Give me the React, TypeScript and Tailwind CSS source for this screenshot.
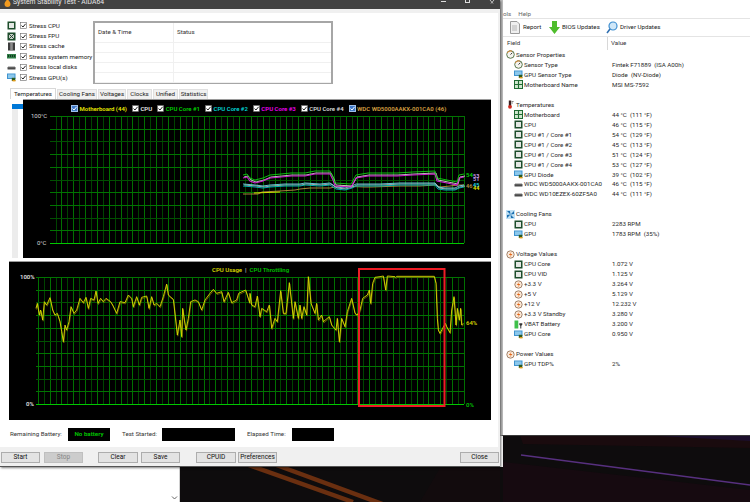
import React from "react";

const FONT = { fontFamily: 'Roboto, "Noto Sans", sans-serif' };

function Icon({ kind }: { kind: string }) {
  const common = { width: 9, height: 9, viewBox: "0 0 9 9", className: "shrink-0 block" };
  switch (kind) {
    case "cpu":
      return (
        <svg {...common}>
          <rect x="0.5" y="0.5" width="8" height="8" fill="#1d4d2b" />
          <rect x="2" y="2" width="5" height="5" fill="#e4e8e4" />
        </svg>
      );
    case "fpu":
      return (
        <svg {...common}>
          <rect x="0.5" y="0.5" width="8" height="8" fill="#1d4d2b" />
          <rect x="2" y="2" width="5" height="5" fill="#c8d0c8" />
          <path d="M2 2L7 7M7 2L2 7" stroke="#20402a" strokeWidth="0.9" />
        </svg>
      );
    case "cache":
      return (
        <svg {...common}>
          <rect x="1" y="0.5" width="7" height="8" fill="#3d3d3d" />
          <rect x="3.2" y="1" width="2.6" height="7" fill="#8b8b8b" />
        </svg>
      );
    case "ram":
      return (
        <svg {...common}>
          <rect x="0" y="2" width="9" height="4.5" fill="#2f7d46" />
          <path d="M1 3h1v2H1zM3 3h1v2H3zM5 3h1v2H5zM7 3h1v2H7z" fill="#123a20" />
        </svg>
      );
    case "board":
      return (
        <svg {...common}>
          <rect x="0.5" y="0.5" width="8" height="8" fill="#cfe6cf" stroke="#1f6b32" />
          <path d="M4.5 1v7M1 4.5h7" stroke="#1f6b32" strokeWidth="1.1" />
        </svg>
      );
    case "disk":
      return (
        <svg {...common}>
          <rect x="0.5" y="4" width="8" height="2.6" rx="0.5" fill="#4a4a4a" />
          <rect x="1" y="3.4" width="7" height="0.9" fill="#9a9a9a" />
        </svg>
      );
    case "gpu":
      return (
        <svg {...common}>
          <rect x="0" y="0.5" width="8.5" height="5.5" fill="#3f93cf" />
          <rect x="1" y="1.4" width="6.5" height="3.6" fill="#8cc8ec" />
          <rect x="4.8" y="4.8" width="3.5" height="3.2" fill="#2d5b1f" />
          <rect x="5.5" y="7" width="3" height="1.4" fill="#e39a15" />
        </svg>
      );
    case "sensor":
      return (
        <svg {...common}>
          <circle cx="4.5" cy="4.5" r="3.8" fill="#f4f4f0" stroke="#4a6a3a" strokeWidth="0.9" />
          <path d="M1.3 3A3.6 3.6 0 0 1 6 1.1" stroke="#d9822b" strokeWidth="1" fill="none" />
          <path d="M4.5 4.5L6.3 2.8" stroke="#222" strokeWidth="0.9" />
        </svg>
      );
    case "temp":
      return (
        <svg {...common}>
          <rect x="2.8" y="0.5" width="2.4" height="5.5" fill="#3a2020" />
          <circle cx="4" cy="6.8" r="1.9" fill="#d0281c" />
          <path d="M5.6 1.5h2M5.6 3h1.4" stroke="#555" strokeWidth="0.7" />
        </svg>
      );
    case "fan":
      return (
        <svg {...common}>
          <rect x="0" y="0" width="9" height="9" fill="#bfe0f4" />
          <path d="M4.5 4.5L1 1h3zM4.5 4.5L8 1v3zM4.5 4.5L8 8H5zM4.5 4.5L1 8V5z" fill="#1a6fb0" />
        </svg>
      );
    case "volt":
      return (
        <svg {...common}>
          <circle cx="4.5" cy="4.5" r="3.7" fill="#fbe9d8" stroke="#8a6a50" strokeWidth="0.8" />
          <path d="M5.6 1.4L2.8 5h2L3.5 7.8 6.4 4h-2z" fill="#e2671a" />
        </svg>
      );
    case "batt":
      return (
        <svg {...common}>
          <rect x="0.5" y="0.5" width="3.8" height="8" fill="#3fc04a" />
          <path d="M6 0.5v3M7.5 0.5v3M5.3 3.2h3v1.6l-1 1V8.5h-1V5.8l-1-1z" fill="#333" />
        </svg>
      );
    default:
      return <span className="w-[9px] h-[9px]" />;
  }
}

function Check({ blue }: { blue?: boolean }) {
  return (
    <svg width="7" height="7" viewBox="0 0 7 7" className="shrink-0 block">
      <rect x="0.5" y="0.5" width="6" height="6" fill={blue ? "#3f78c8" : "#ffffff"} stroke={blue ? "#9fc0ea" : "#666"} strokeWidth={blue ? 1 : 0.6} />
      <path d="M1.5 3.6L3 5L5.6 1.8" stroke={blue ? "#fff" : "#222"} strokeWidth="1" fill="none" />
    </svg>
  );
}

const stress = [
  ["cpu", "Stress CPU"],
  ["fpu", "Stress FPU"],
  ["cache", "Stress cache"],
  ["ram", "Stress system memory"],
  ["disk", "Stress local disks"],
  ["gpu", "Stress GPU(s)"],
];

const tabs: [string, string][] = [
  ["Temperatures", "w-[46px]"],
  ["Cooling Fans", "w-[40px]"],
  ["Voltages", "w-[28px]"],
  ["Clocks", "w-[25px]"],
  ["Unified", "w-[25px]"],
  ["Statistics", "w-[29px]"],
];

function Grid({ x0, x1, y0, y1 }: { x0: number; x1: number; y0: number; y1: number }) {
  const hs: number[] = [];
  for (let i = 0; i <= 10; i++) hs.push(y0 + ((y1 - y0) * i) / 10);
  const vs: number[] = [];
  for (let x = x1; x >= x0; x -= 5.92) vs.push(x);
  return (
    <g shapeRendering="crispEdges">
      {vs.map((x, i) => (
        <line key={x} x1={Math.round(x)} x2={Math.round(x)} y1={y0} y2={y1} stroke={i % 2 ? "#004400" : "#017001"} strokeWidth="1" />
      ))}
      {hs.map((y, i) => (
        <line key={y} x1={x0} x2={x1} y1={Math.round(y)} y2={Math.round(y)} stroke={i === 10 ? "#00c800" : i % 3 === 2 ? "#015001" : "#017401"} strokeWidth="1" />
      ))}
    </g>
  );
}

const pts = (a: number[][]) => a.map((p) => p.join(",")).join(" ");

// temperature traces, in page coordinates
const green = [[243,175],[247,174],[250,178],[255,180],[263,178],[270,175],[281,174],[291,173],[305,173],[315,171],[330,171],[333,177],[335,183],[351,184],[356,175],[368,173],[380,173],[397,173],[413,172],[435,171],[437,178],[447,180],[457,182],[459,175],[464,174]];
const shift = (a: number[][], d: number, dx = 0) => a.map(([x, y]) => [x + dx, y + d]);
const cyan = [[243,184],[255,185],[263,186],[270,185],[285,184],[300,184],[305,183],[320,184],[330,183],[336,187],[345,188],[352,186],[356,184],[380,184],[400,183],[420,183],[435,183],[438,187],[445,188],[455,188],[459,186],[464,185]];
const orange = [[243,194],[258,194],[262,192],[280,191],[295,190],[300,189],[310,188],[330,188],[340,186],[364,187],[372,187],[400,186],[420,186],[435,185],[440,187],[450,186],[458,185],[464,185]];
const yellow = [[254,193],[280,192]];

// cpu usage trace, in page coordinates
const u1 = [[108,145],[112,130],[118,165],[122,150],[128,180],[133,125],[140,135],[150,113],[158,150],[165,165],[172,160],[180,185],[185,215],[190,245],[195,195],[200,210],[207,185],[213,140],[222,160],[230,150],[240,115],[250,128],[258,112],[265,145],[272,115],[282,120],[288,93],[294,130],[302,115],[310,125],[318,115],[332,125],[338,135],[350,160],[360,125],[375,128],[385,105],[395,115],[400,140],[410,110],[418,135],[425,112],[440,108],[447,145],[455,110],[462,135],[470,130],[480,140],[490,110],[500,72],[505,105],[520,118],[527,180],[532,225],[540,180],[545,230],[548,145],[553,180],[558,210],[565,175],[572,125],[585,120],[595,125],[605,150],[615,120],[630,100],[640,88],[650,100],[665,95],[672,125],[685,97],[695,128],[710,120],[716,100],[737,90],[749,128]];
const u2 = [[0,100],[5,135],[15,140],[22,108],[30,170],[35,145],[50,155],[58,135],[65,205],[75,175],[82,185],[92,92],[100,160],[108,160],[118,68],[130,175],[135,125],[145,175],[150,135],[155,175],[162,140],[170,165],[175,50],[183,130],[195,160],[200,130],[205,180],[215,165],[220,185],[238,170],[245,195],[258,210],[262,175],[268,245],[275,175],[285,200],[292,155],[305,115],[315,160],[322,165],[330,150],[338,115],[352,105],[358,90],[362,130],[368,70],[375,52],[390,50],[400,48],[407,90],[412,48],[435,50],[437,52],[440,49],[553,49],[558,70],[562,175],[565,210],[570,220],[578,205],[586,190],[590,200],[600,218],[605,150],[612,110],[618,195],[622,145],[628,180],[632,145],[635,195],[640,190]];
const usage = [
  ...u1.map(([x, y]) => [x / 3, 260 + y / 3]),
  ...u2.map(([x, y]) => [250 + x / 3, 260 + y / 3]),
];

function TempChart() {
  const legend: [string, string, boolean][] = [
    ["Motherboard (44)", "text-[#e6e600]", true],
    ["CPU", "text-[#e8e8e8]", false],
    ["CPU Core #1", "text-[#00d000]", false],
    ["CPU Core #2", "text-[#00d8d8]", false],
    ["CPU Core #3", "text-[#f000f0]", false],
    ["CPU Core #4", "text-[#d8d8d8]", false],
    ["WDC WD5000AAKX-001CA0 (46)", "text-[#d8a040]", true],
  ];
  return (
    <div className="w-[468px] h-[159px] bg-black border-t border-[#9a9a9a] relative">
      <svg width="468" height="158" viewBox="23 100 468 158" className="block" style={FONT}>
        <Grid x0={50} x1={464} y0={116} y1={243} />
        <polyline points={pts(orange)} fill="none" stroke="#b89040" strokeWidth="0.9" />
        <polyline points={pts(yellow)} fill="none" stroke="#e6e600" strokeWidth="0.9" />
        <polyline points={pts(shift(cyan, 1, 1))} fill="none" stroke="#d0d0d0" strokeWidth="0.8" />
        <polyline points={pts(shift(cyan, 2))} fill="none" stroke="#00b0b0" strokeWidth="1" />
        <polyline points={pts(cyan)} fill="none" stroke="#6ad8e8" strokeWidth="0.9" />
        <polyline points={pts(shift(green, 2, 1))} fill="none" stroke="#e8e8e8" strokeWidth="0.8" />
        <polyline points={pts(shift(green, 3))} fill="none" stroke="#d020d0" strokeWidth="1.1" />
        <polyline points={pts(green)} fill="none" stroke="#10d010" strokeWidth="0.9" />
        <text x="31" y="118" fontSize="6" fill="#d8d8d8">100°C</text>
        <text x="37" y="245" fontSize="6" fill="#d8d8d8">0°C</text>
        <text x="466" y="177" fontSize="6" fontWeight="600" fill="#00d000">54</text>
        <text x="473" y="178" fontSize="5.5" fontWeight="600" fill="#d0a0e8">53</text>
        <text x="473" y="181" fontSize="5.5" fontWeight="600" fill="#c0a0e8">51</text>
        <text x="466" y="188" fontSize="5.5" fontWeight="600" fill="#b89040">46</text>
        <text x="473" y="187" fontSize="5.5" fontWeight="600" fill="#20d8e8">45</text>
        <text x="473" y="190" fontSize="5.5" fontWeight="600" fill="#e6e600">44</text>
      </svg>
      <div className="absolute left-[48px] top-[5px] flex items-center gap-[5px] text-[6px] font-semibold whitespace-nowrap leading-none">
        {legend.map(([t, c, b]) => (
          <span key={t} className={`flex items-center gap-[1.5px] ${c}`}>
            <Check blue={b} />
            {t}
          </span>
        ))}
      </div>
    </div>
  );
}

function UsageChart() {
  return (
    <div className="w-[482px] h-[159px] ml-[9px] bg-black border-t border-[#9a9a9a] relative">
      <svg width="482" height="158" viewBox="9 262 482 158" className="block" style={FONT}>
        <Grid x0={36} x1={464} y0={277} y1={404} />
        <polyline points={pts(usage.map(([x, y]) => [x + 0.5, y + 1.2]))} fill="none" stroke="#7a7a00" strokeWidth="0.7" />
        <polyline points={pts(usage)} fill="none" stroke="#dcdc00" strokeWidth="0.9" strokeLinejoin="round" />
        <rect x="359" y="269" width="85.5" height="137" fill="none" stroke="#ee1c25" strokeWidth="2" />
        <text x="20" y="279" fontSize="6" fontWeight="600" fill="#e0e0e0">100%</text>
        <text x="26" y="406" fontSize="6" fontWeight="600" fill="#e0e0e0">0%</text>
        <text x="466" y="325" fontSize="6" fontWeight="600" fill="#d0d000">64%</text>
        <text x="466" y="407" fontSize="6" fontWeight="600" fill="#00c000">0%</text>
      </svg>
      <div className="absolute left-[203px] top-[5px] flex gap-[3px] text-[6px] font-semibold whitespace-nowrap leading-none">
        <span className="text-[#d8d800]">CPU Usage</span>
        <span className="text-[#d8d8d8]">|</span>
        <span className="text-[#00c000]">CPU Throttling</span>
      </div>
    </div>
  );
}

function Btn({ label, w, disabled }: { label: string; w: string; disabled?: boolean }) {
  return (
    <div className={`${w} h-[11px] border flex items-center justify-center text-[6.5px] leading-none ${disabled ? "bg-[#cccccc] border-[#bfbfbf] text-[#858585]" : "bg-[#e3e3e3] border-[#adadad] text-[#111]"}`}>
      {label}
    </div>
  );
}

const sensorRows: { icon?: string; f?: string; v?: string; group?: boolean }[] = [
  { group: true, icon: "sensor", f: "Sensor Properties" },
  { icon: "sensor", f: "Sensor Type", v: "Fintek F71889  (ISA A00h)" },
  { icon: "gpu", f: "GPU Sensor Type", v: "Diode  (NV-Diode)" },
  { icon: "board", f: "Motherboard Name", v: "MSI MS-7592" },
  {},
  { group: true, icon: "temp", f: "Temperatures" },
  { icon: "board", f: "Motherboard", v: "44 °C  (111 °F)" },
  { icon: "cpu", f: "CPU", v: "46 °C  (115 °F)" },
  { icon: "cpu", f: "CPU #1 / Core #1", v: "54 °C  (129 °F)" },
  { icon: "cpu", f: "CPU #1 / Core #2", v: "45 °C  (113 °F)" },
  { icon: "cpu", f: "CPU #1 / Core #3", v: "51 °C  (124 °F)" },
  { icon: "cpu", f: "CPU #1 / Core #4", v: "53 °C  (127 °F)" },
  { icon: "gpu", f: "GPU Diode", v: "39 °C  (102 °F)" },
  { icon: "disk", f: "WDC WD5000AAKX-001CA0", v: "46 °C  (115 °F)" },
  { icon: "disk", f: "WDC WD10EZEX-60ZF5A0", v: "44 °C  (111 °F)" },
  {},
  { group: true, icon: "fan", f: "Cooling Fans" },
  { icon: "cpu", f: "CPU", v: "2283 RPM" },
  { icon: "gpu", f: "GPU", v: "1783 RPM  (35%)" },
  {},
  { group: true, icon: "volt", f: "Voltage Values" },
  { icon: "cpu", f: "CPU Core", v: "1.072 V" },
  { icon: "cpu", f: "CPU VID", v: "1.125 V" },
  { icon: "volt", f: "+3.3 V", v: "3.264 V" },
  { icon: "volt", f: "+5 V", v: "5.129 V" },
  { icon: "volt", f: "+12 V", v: "12.232 V" },
  { icon: "volt", f: "+3.3 V Standby", v: "3.280 V" },
  { icon: "batt", f: "VBAT Battery", v: "3.200 V" },
  { icon: "gpu", f: "GPU Core", v: "0.950 V" },
  {},
  { group: true, icon: "volt", f: "Power Values" },
  { icon: "gpu", f: "GPU TDP%", v: "2%" },
];

function SensorRow({ r }: { r: (typeof sensorRows)[number] }) {
  return (
    <div className="h-[9.97px] flex items-center whitespace-pre text-[#2a2a2a] leading-none">
      <div className={`flex items-center gap-px w-[109px] shrink-0 ${r.group ? "pl-[3px]" : "pl-[11px]"}`}>
        {r.icon && <Icon kind={r.icon} />}
        <span>{r.f}</span>
      </div>
      <span>{r.v}</span>
    </div>
  );
}

export default function App() {
  return (
    <div className="relative w-[750px] h-[502px] overflow-hidden bg-[#0d0b0c] text-[6.2px]" style={FONT}>
      {/* wallpaper */}
      <svg width="750" height="502" viewBox="0 0 750 502" className="absolute inset-0">
        <rect width="750" height="502" fill="#0e0c0d" />
        <path d="M420 502L440 468H500V502Z" fill="#120b0d" />
        <path d="M503 502V462L750 490V502Z" fill="#160a10" />
        <path d="M520 435H750V448L523 444Z" fill="#1a0b0e" />
        <path d="M640 435H750V441Z" fill="#1c0f2c" />
        <path d="M521 455L750 485" stroke="#57307f" strokeWidth="1.4" />
        <path d="M243 463L353 502M271 463L385 505" stroke="#6a2f10" strokeWidth="4.5" />
      </svg>

      {/* window behind, lower left */}
      <div className="absolute left-0 top-[467px] w-[180px] h-[35px] bg-white border-r border-[#d0d0d0] flex items-end justify-end">
        <svg width="7" height="7" viewBox="0 0 7 7" className="mb-[1px] mr-[1px]">
          <path d="M1 2.5L3.5 5L6 2.5" stroke="#666" fill="none" />
        </svg>
      </div>

      {/* sensor window */}
      <div className="absolute left-[500px] top-0 w-[250px] h-[436px] bg-white border-l-[3px] border-b border-l-[#bdbdbd] border-b-[#3a3a3a] flex flex-col">
        <div className="h-[19px] border-b border-[#e4e4e4] pl-0 pt-[11px] flex gap-[7px] text-[#666] leading-none">
          <span>ols</span>
          <span>Help</span>
        </div>
        <div className="h-[17px] flex items-center pl-[7px] text-[#222] leading-none">
          <svg width="10" height="13" viewBox="0 0 10 13" className="mr-[3px]">
            <path d="M0.5 0.5H7L9.5 3V12.5H0.5Z" fill="#efefef" stroke="#9a9a9a" />
            <path d="M2 5h5M2 7h5M2 9h5" stroke="#b5b5b5" />
          </svg>
          <span className="w-[26px]">Report</span>
          <svg width="11" height="13" viewBox="0 0 11 13" className="mr-[2px]">
            <path d="M3 0H8V6H11L5.5 13L0 6H3Z" fill="#4fbd2c" />
          </svg>
          <span className="w-[44px]">BIOS Updates</span>
          <svg width="12" height="13" viewBox="0 0 12 13" className="mr-[2px]">
            <circle cx="7" cy="5" r="4" fill="#cfe7f8" stroke="#3f8fd0" strokeWidth="1.2" />
            <path d="M4 8L1 12" stroke="#2f6fb0" strokeWidth="1.6" />
          </svg>
          <span>Driver Updates</span>
        </div>
        <div className="h-[14px] flex items-center text-[#333] leading-none border-t border-[#e4e4e4]">
          <span className="w-[105px] pl-[4px] border-r border-[#d8d8d8] h-full flex items-center">Field</span>
          <span className="pl-[3px]">Value</span>
        </div>
        <div className="flex-1 flex flex-col">
          {sensorRows.map((r, i) => (
            <SensorRow key={i} r={r} />
          ))}
        </div>
      </div>
      <div className="absolute left-[500px] top-[436px] w-[3px] h-[31px] bg-[#f4f4f4]" />

      {/* stability test window */}
      <div className="absolute left-0 top-0 w-[500px] h-[467px] flex flex-col bg-[#f0f0f0] border-b border-[#555] shadow-[1px_1px_2px_rgba(0,0,0,0.5)]">
        <div className="h-[9px] bg-[#424242] overflow-hidden relative flex items-start shrink-0">
          <div className="flex items-center -mt-[4px] pl-[4px] gap-[2px] text-[#e8e8e8] leading-none h-[12px]">
            <svg width="7" height="9" viewBox="0 0 7 9">
              <path d="M3.5 1C5 3 6.5 4 6.5 6A3 3 0 0 1 .5 6C.5 4 2 3 3.5 1Z" fill="#f29a1e" />
            </svg>
            <span className="text-[6.8px]">System Stability Test - AIDA64</span>
          </div>
          <div className="ml-auto flex gap-[19px] pr-[5px]">
            <span className="w-[5px] h-px bg-[#ddd] mt-px" />
            <span className="w-[5px] h-[3px] border border-t-0 border-[#ddd]" />
            <svg width="6" height="4" viewBox="0 0 6 4"><path d="M1 0L4 3.5M5 0L2 3.5" stroke="#ddd" strokeWidth="0.8" /></svg>
          </div>
        </div>
        <div className="mt-[4px] bg-white h-[434px] flex flex-col w-[498px] pl-[2px] shrink-0">
          <div className="h-[75px] flex shrink-0 text-[#222]">
            <div className="pl-[5px] pt-[7.5px] w-[91px] flex flex-col whitespace-nowrap leading-none">
              {stress.map(([k, t]) => (
                <div key={t} className="h-[10.4px] flex items-center">
                  <Icon kind={k} />
                  <span className="ml-[4px]"><Check /></span>
                  <span className="ml-[2px]">{t}</span>
                </div>
              ))}
            </div>
            <div className="mt-[8px] w-[240px] h-[63px] border-2 border-[#a6a6a6] flex flex-col text-[#333] leading-none">
              <div className="h-[20px] border-b border-[#f0f0f0] flex items-center shrink-0">
                <span className="w-[79px] pl-[3px] h-full flex items-center border-r border-[#eeeeee]">Date &amp; Time</span>
                <span className="pl-[3px]">Status</span>
              </div>
              {[0, 1, 2, 3].map((i) => (
                <div key={i} className="h-[10px] border-b border-[#f0f0f0] flex shrink-0">
                  <span className="w-[79px] border-r border-[#f0f0f0]" />
                </div>
              ))}
            </div>
          </div>
          <div className="h-[11px] flex pl-[8px] items-end shrink-0 text-[#222] leading-none gap-px">
            {tabs.map(([t, w], i) => (
              <div key={t} className={`${w} flex items-center justify-center whitespace-nowrap ${i === 0 ? "h-[11px] bg-white border-x border-t border-[#d8d8d8]" : "h-[10px] bg-[#f0f0f0] border-x border-t border-[#e0e0e0]"}`}>
                {t}
              </div>
            ))}
          </div>
          <div className="h-[159px] flex pl-[8px] shrink-0">
            <div className="w-[13px] h-full pt-[5px] flex flex-col">
              <div className="h-[5px] bg-[#0078d7] w-[11px] shrink-0 ml-[2px]" />
              <div className="flex-1 w-[6px] ml-[2px] bg-[#ececec]" />
            </div>
            <TempChart />
          </div>
          <div className="h-[3px] shrink-0" />
          <div className="-ml-[2px] shrink-0"><UsageChart /></div>
          <div className="flex-1 flex items-center pl-[8px] pt-[2px] text-[#333] whitespace-nowrap leading-none">
            <span className="w-[58px]">Remaining Battery:</span>
            <div className="w-[42px] h-[13px] bg-black flex items-center justify-center text-[#00c800] font-semibold">No battery</div>
            <span className="ml-[12px] w-[40px]">Test Started:</span>
            <div className="w-[73px] h-[13px] bg-black" />
            <span className="ml-[12px] w-[45px]">Elapsed Time:</span>
            <div className="w-[42px] h-[13px] bg-black" />
          </div>
        </div>
        <div className="flex-1 flex items-center pl-[1px] pr-[1px] pt-[2px]">
          <Btn label="Start" w="w-[39px]" />
          <div className="ml-[4px]"><Btn label="Stop" w="w-[39px]" disabled /></div>
          <div className="ml-[15px]"><Btn label="Clear" w="w-[40px]" /></div>
          <div className="ml-[3px]"><Btn label="Save" w="w-[39px]" /></div>
          <div className="ml-[16px]"><Btn label="CPUID" w="w-[40px]" /></div>
          <div className="ml-[2px]"><Btn label="Preferences" w="w-[39px]" /></div>
          <div className="ml-auto"><Btn label="Close" w="w-[39px]" /></div>
        </div>
      </div>
    </div>
  );
}
